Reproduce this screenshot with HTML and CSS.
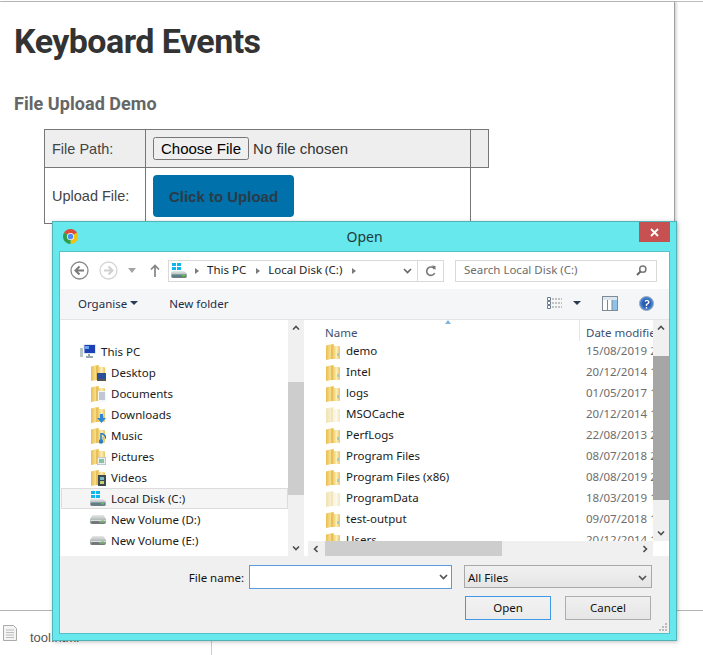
FILE: index.html
```html
<!DOCTYPE html>
<html lang="en">
<head>
<meta charset="utf-8">
<title>File Upload Demo</title>
<link rel="stylesheet" href="styles.css">
</head>
<body>
<svg class="defs" width="0" height="0" aria-hidden="true">
  <defs>
    <linearGradient id="fold" x1="0" x2="1" y1="0" y2="0">
      <stop offset="0" stop-color="#e9bd52"/><stop offset=".3" stop-color="#f7dc8a"/><stop offset=".55" stop-color="#f3d06e"/><stop offset=".75" stop-color="#fbeeb8"/><stop offset="1" stop-color="#e8c566"/>
    </linearGradient>
    <linearGradient id="foldl" x1="0" x2="1" y1="0" y2="0">
      <stop offset="0" stop-color="#efe2b4"/><stop offset=".4" stop-color="#f9f1d2"/><stop offset=".75" stop-color="#fdf9e8"/><stop offset="1" stop-color="#efe6c4"/>
    </linearGradient>
    <linearGradient id="drv" x1="0" x2="0" y1="0" y2="1">
      <stop offset="0" stop-color="#e8e8e8"/><stop offset=".5" stop-color="#b5bcbc"/><stop offset="1" stop-color="#6b7272"/>
    </linearGradient>
    <symbol id="folder" viewBox="0 0 14 16">
      <path d="M0 1.5 L6 0 H8 V2 H13 Q14 2 14 3 V14 Q14 15 13 15 H6 L0 16 Z" fill="url(#fold)"/>
      <path d="M6 1 V15" stroke="#d9a93c" stroke-width="1"/>
      <path d="M12 9v3" stroke="#6fb6dd" stroke-width="1"/>
    </symbol>
    <symbol id="folder-light" viewBox="0 0 14 16">
      <path d="M0 1.5 L6 0 H8 V2 H13 Q14 2 14 3 V14 Q14 15 13 15 H6 L0 16 Z" fill="url(#foldl)"/>
      <path d="M6 1 V15" stroke="#e6d8a6" stroke-width="1"/>
    </symbol>
    <symbol id="drive" viewBox="0 0 16 9">
      <path d="M2 1 Q2 0 3 0 H13 Q14 0 14 1 L16 4 V7 Q16 9 14 9 H2 Q0 9 0 7 V4 Z" fill="url(#drv)"/>
      <path d="M0.5 5.5 H15.5" stroke="#f4f4f4" stroke-width=".7"/>
      <rect x="11" y="5.5" width="3" height="2" fill="#57c84a"/>
      <rect x="2" y="6.5" width="7" height="1" fill="#596060"/>
    </symbol>
    <symbol id="windrive" viewBox="0 0 16 16">
      <rect x="1" y="0" width="4" height="3" fill="#11b5ee"/><rect x="6" y="0" width="4" height="3" fill="#11b5ee"/>
      <rect x="1" y="4" width="4" height="3" fill="#11b5ee"/><rect x="6" y="4" width="4" height="3" fill="#11b5ee"/>
      <path d="M1 8 H13 L16 10.5 V13 Q16 15 14 15 H2 Q0 15 0 13 V10 Z" fill="url(#drv)"/>
      <rect x="1" y="11.5" width="14" height="2.5" fill="#5d7f87"/>
      <rect x="11" y="12" width="3" height="1.5" fill="#57c84a"/>
    </symbol>
  </defs>
</svg>

<div class="topline"></div>
<main class="page">
  <h1 class="title">Keyboard Events</h1>
  <h2 class="subtitle">File Upload Demo</h2>
  <table class="upload">
    <tr class="shaded">
      <td class="label-cell">File Path:</td>
      <td class="field-cell"><input class="file" type="file"></td>
      <td class="end-cell"></td>
    </tr>
    <tr>
      <td class="label-cell">Upload File:</td>
      <td class="field-cell"><button class="upload-btn" type="button">Click to Upload</button></td>
    </tr>
  </table>
</main>

<footer class="downloads">
  <div class="download">
    <svg class="doc" width="14" height="16" viewBox="0 0 14 16"><path d="M.5.5h10l3 3v12H.5z" fill="#f4f4f4" stroke="#a9a9a9"/><path d="M3 5h8M3 7.500h8M3 10h8M3 12.500h8" stroke="#bdbdbd"/></svg>
    <span class="download-name">tool.html</span>
  </div>
</footer>

<section class="dialog">
  <header class="titlebar">
    <svg class="chrome" width="15" height="15" viewBox="0 0 16 16">
      <path d="M8 8 L1.1 4 A8 8 0 0 1 14.9 4 Z" fill="#dd4b39"/>
      <path d="M8 8 L14.9 4 A8 8 0 0 1 8 16 Z" fill="#f4c20d"/>
      <path d="M8 8 L8 16 A8 8 0 0 1 1.1 4 Z" fill="#2e9e49"/>
      <circle cx="8" cy="8" r="3.8" fill="#fff"/><circle cx="8" cy="8" r="3" fill="#4c8bf5"/>
    </svg>
    <span class="dialog-title">Open</span>
    <button class="close" type="button" aria-label="Close">
      <svg width="9" height="9" viewBox="0 0 9 9"><path d="M1 1l7 7M8 1L1 8" stroke="#fff" stroke-width="1.8"/></svg>
    </button>
  </header>

  <div class="client">
    <div class="nav">
      <svg class="nav-back" width="19" height="19" viewBox="0 0 19 19"><circle cx="9.5" cy="9.5" r="8.5" fill="#fff" stroke="#8a8a8a" stroke-width="1.3"/><path d="M14 9.5H6M9.5 5.5l-4 4 4 4" fill="none" stroke="#7a7a7a" stroke-width="2"/></svg>
      <svg class="nav-fwd" width="19" height="19" viewBox="0 0 19 19"><circle cx="9.5" cy="9.5" r="8.5" fill="#fff" stroke="#d4d4d4" stroke-width="1.3"/><path d="M5 9.5h8M9.5 5.5l4 4-4 4" fill="none" stroke="#d0d0d0" stroke-width="2"/></svg>
      <svg class="nav-caret" width="8" height="5" viewBox="0 0 8 5"><path d="M0 0h8L4 5z" fill="#a4a4a4"/></svg>
      <svg class="nav-up" width="10" height="13" viewBox="0 0 10 13"><path d="M5 13V2M1 5.5L5 1.5l4 4" fill="none" stroke="#858585" stroke-width="1.7"/></svg>
      <div class="crumbs">
        <svg class="crumb-drive" width="16" height="16"><use href="#windrive"/></svg>
        <i class="tri"></i><span>This PC</span><i class="tri"></i><span>Local Disk (C:)</span><i class="tri"></i>
        <svg class="crumb-chev" width="9" height="6" viewBox="0 0 9 6"><path d="M1 1l3.5 3.5L8 1" fill="none" stroke="#666" stroke-width="1.6"/></svg>
        <span class="crumb-refresh">
          <svg width="11" height="12" viewBox="0 0 11 12"><path d="M9.5 4A4.2 4.2 0 1 0 9.7 8" fill="none" stroke="#777" stroke-width="1.6"/><path d="M6.5 0.5L10.5 1V5z" fill="#777"/></svg>
        </span>
      </div>
      <div class="search">
        <span>Search Local Disk (C:)</span>
        <svg width="11" height="11" viewBox="0 0 11 11"><circle cx="6.8" cy="4.2" r="3.1" fill="none" stroke="#777" stroke-width="1.5"/><path d="M4.5 6.5L1 10" stroke="#666" stroke-width="2"/></svg>
      </div>
    </div>

    <div class="toolbar">
      <span class="tool">Organise</span><i class="tool-caret"></i>
      <span class="tool tool-new">New folder</span>
      <span class="tool-right">
        <svg width="15" height="12" viewBox="0 0 15 12"><path d="M.5.5h3v3h-3zM.5 4.5h3v3h-3zM.5 8.5h3v3h-3z" fill="#fff" stroke="#6d7d90"/><path d="M5 2h10M5 6h10M5 10h10" stroke="#8e8e8e" stroke-dasharray="2 1"/></svg>
        <i class="tool-caret view-caret"></i>
        <svg class="pane-icon" width="16" height="15" viewBox="0 0 16 15"><rect x=".5" y=".5" width="15" height="14" fill="#fff" stroke="#7e8b96"/><rect x="1" y="1" width="14" height="3" fill="#dbe6ee"/><rect x="10" y="4" width="5" height="10" fill="#8fc2ea"/><path d="M5.5 4v10M10 4v10" stroke="#7e8b96"/></svg>
        <svg class="help-icon" width="15" height="15" viewBox="0 0 15 15"><circle cx="7.5" cy="7.5" r="7" fill="#3f7fd0" stroke="#a3acb8"/><circle cx="7.5" cy="7.5" r="4.5" fill="#2b5db0"/><path d="M6 5.5Q7.5 3.5 9.300 5T7.500 8.500V10M7.500 11v1.500" fill="none" stroke="#fff" stroke-width="1.4"/></svg>
      </span>
    </div>

    <div class="panes">
      <nav class="tree-pane">
        <ul class="tree">
          <li class="pc">
            <svg width="16" height="15" viewBox="0 0 16 15"><rect x="0" y="4" width="3" height="9" fill="#b9c6c6"/><rect x="3.500" y="0" width="12.500" height="10" fill="#dfe6ee"/><rect x="4.500" y="1" width="10.500" height="8" fill="#1d3fb5"/><rect x="5" y="2" width="4" height="3" fill="#68a7ea"/><path d="M9 10v2M6 13h7" stroke="#9aa4ad" stroke-width="2"/></svg>
            <span>This PC</span>
          </li>
          <li><span class="tree-ico"><svg width="14" height="16"><use href="#folder"/></svg><svg class="over" width="9" height="8" viewBox="0 0 9 8"><rect x="0" y="0" width="9" height="6" fill="#2c4f9a"/><rect y="6" width="9" height="2" fill="#555"/></svg></span><span>Desktop</span></li>
          <li><span class="tree-ico"><svg width="14" height="16"><use href="#folder"/></svg><svg class="over" width="8" height="11" viewBox="0 0 8 11"><rect width="8" height="11" fill="#f4f6f8"/><path d="M1 2h6M1 4h6M1 6h6M1 8h6" stroke="#8b9bac"/></svg></span><span>Documents</span></li>
          <li><span class="tree-ico"><svg width="14" height="16"><use href="#folder"/></svg><svg class="over" width="9" height="9" viewBox="0 0 9 9"><path d="M3 0h3v4h3L4.500 9 0 4h3z" fill="#2e86d8"/></svg></span><span>Downloads</span></li>
          <li><span class="tree-ico"><svg width="14" height="16"><use href="#folder"/></svg><svg class="over" width="7" height="11" viewBox="0 0 7 11"><path d="M2 8V0q5 2 5 6" fill="none" stroke="#2a7fc4" stroke-width="1.500"/><circle cx="2" cy="8.500" r="2.200" fill="#2a7fc4"/></svg></span><span>Music</span></li>
          <li><span class="tree-ico"><svg width="14" height="16"><use href="#folder"/></svg><svg class="over" width="9" height="8" viewBox="0 0 9 8"><rect width="9" height="8" fill="#e8eef0" stroke="#9aa7ad"/><rect x="2" y="2" width="5" height="4" fill="#8cc0a6"/></svg></span><span>Pictures</span></li>
          <li><span class="tree-ico"><svg width="14" height="16"><use href="#folder"/></svg><svg class="over" width="8" height="11" viewBox="0 0 8 11"><rect width="8" height="11" fill="#3e4a4c"/><rect x="2" y="2" width="4" height="3" fill="#78b6c8"/><rect x="2" y="6" width="4" height="3" fill="#c2d07c"/></svg></span><span>Videos</span></li>
          <li class="selected"><svg width="16" height="16"><use href="#windrive"/></svg><span>Local Disk (C:)</span></li>
          <li class="vol"><svg width="16" height="9"><use href="#drive"/></svg><span>New Volume (D:)</span></li>
          <li class="vol"><svg width="16" height="9"><use href="#drive"/></svg><span>New Volume (E:)</span></li>
        </ul>
        <div class="vscroll tree-scroll">
          <svg class="arr" width="8" height="5" viewBox="0 0 8 5"><path d="M1 4.500L4 1.500l3 3" fill="none" stroke="#505050" stroke-width="1.600"/></svg>
          <div class="track"><div class="thumb"></div></div>
          <svg class="arr" width="8" height="5" viewBox="0 0 8 5"><path d="M1 .5l3 3 3-3" fill="none" stroke="#505050" stroke-width="1.600"/></svg>
        </div>
      </nav>

      <div class="list-pane">
        <div class="list-main">
          <div class="list-head">
            <span class="col-name">Name</span>
            <i class="sort"></i>
            <span class="col-date">Date modified</span>
          </div>
          <ul class="files">
            <li><svg width="14" height="16"><use href="#folder"/></svg><span class="fname">demo</span><span class="fdate">15/08/2019 2</span></li>
            <li><svg width="14" height="16"><use href="#folder"/></svg><span class="fname">Intel</span><span class="fdate">20/12/2014 1</span></li>
            <li><svg width="14" height="16"><use href="#folder"/></svg><span class="fname">logs</span><span class="fdate">01/05/2017 1</span></li>
            <li><svg width="14" height="16"><use href="#folder-light"/></svg><span class="fname">MSOCache</span><span class="fdate">20/12/2014 1</span></li>
            <li><svg width="14" height="16"><use href="#folder"/></svg><span class="fname">PerfLogs</span><span class="fdate">22/08/2013 2</span></li>
            <li><svg width="14" height="16"><use href="#folder"/></svg><span class="fname">Program Files</span><span class="fdate">08/07/2018 2</span></li>
            <li><svg width="14" height="16"><use href="#folder"/></svg><span class="fname">Program Files (x86)</span><span class="fdate">08/08/2019 2</span></li>
            <li><svg width="14" height="16"><use href="#folder-light"/></svg><span class="fname">ProgramData</span><span class="fdate">18/03/2019 1</span></li>
            <li><svg width="14" height="16"><use href="#folder"/></svg><span class="fname">test-output</span><span class="fdate">09/07/2018 1</span></li>
            <li><svg width="14" height="16"><use href="#folder"/></svg><span class="fname">Users</span><span class="fdate">20/12/2014 1</span></li>
          </ul>
          <div class="hscroll">
            <svg class="arr" width="5" height="8" viewBox="0 0 5 8"><path d="M4.500 1L1.500 4l3 3" fill="none" stroke="#505050" stroke-width="1.600"/></svg>
            <div class="htrack"><div class="hthumb"></div></div>
            <svg class="arr" width="5" height="8" viewBox="0 0 5 8"><path d="M.5 1l3 3-3 3" fill="none" stroke="#505050" stroke-width="1.600"/></svg>
          </div>
        </div>
        <div class="vscroll list-scroll">
          <svg class="arr" width="8" height="5" viewBox="0 0 8 5"><path d="M1 4.500L4 1.500l3 3" fill="none" stroke="#505050" stroke-width="1.600"/></svg>
          <div class="track"><div class="thumb"></div></div>
          <svg class="arr" width="8" height="5" viewBox="0 0 8 5"><path d="M1 .5l3 3 3-3" fill="none" stroke="#505050" stroke-width="1.600"/></svg>
        </div>
      </div>
    </div>

    <div class="bottom">
      <div class="bottom-row">
        <label class="fname-label" for="fn">File name:</label>
        <div class="fname-box">
          <input id="fn" class="fname-input" type="text">
          <svg width="9" height="6" viewBox="0 0 9 6"><path d="M1 1l3.500 3.500L8 1" fill="none" stroke="#555" stroke-width="1.700"/></svg>
        </div>
        <div class="type-box">
          <span>All Files</span>
          <svg width="9" height="6" viewBox="0 0 9 6"><path d="M1 1l3.500 3.500L8 1" fill="none" stroke="#555" stroke-width="1.700"/></svg>
        </div>
      </div>
      <div class="bottom-actions">
        <button class="dlg-btn primary" type="button">Open</button>
        <button class="dlg-btn" type="button">Cancel</button>
      </div>
      <svg class="grip" width="8" height="8" viewBox="0 0 8 8"><path d="M6 0h2v2H6zM3 3h2v2H3zM6 3h2v2H6zM0 6h2v2H0zM3 6h2v2H3zM6 6h2v2H6z" fill="#bcbcbc"/></svg>
    </div>
  </div>
</section>
</body>
</html>
```
FILE: styles.css
```css
* { box-sizing: border-box; }
html, body { margin: 0; padding: 0; }
body {
  position: relative;
  width: 703px;
  height: 655px;
  overflow: hidden;
  background: #fff;
  font-family: "Liberation Sans", Arial, sans-serif;
}
.defs { position: absolute; }
ul { list-style: none; margin: 0; padding: 0; }
i { display: block; }

.topline {
  height: 1px;
  margin-top: 1px;
  background: #bdbdbd;
}
.page {
  width: 675px;
  height: 608px;
  border-right: 1px solid #a0a0a0;
  box-shadow: 2px 0 2px rgba(0,0,0,.15);
  padding: 17px 0 0 14px;
  overflow: hidden;
}
.title {
  margin: 0;
  font: 700 34px/44px Roboto, sans-serif;
  letter-spacing: -.55px;
  color: #333;
}
.subtitle {
  margin: 29px 0 0;
  font: 700 18px/24px Roboto, sans-serif;
  letter-spacing: .05px;
  color: #666;
}
.upload {
  margin: 13px 0 0 30px;
  border-collapse: collapse;
  width: 445px;
  font-size: 14.500px;
  color: #444;
}
.upload td { border: 1px solid #777; padding: 0 7px; }
.shaded { background: #eee; height: 38px; }
.label-cell { width: 101px; }
.end-cell { width: 18px; }
.file { font: 15px "Liberation Sans", sans-serif; color: #333; display: block; width: 300px; }
.upload-btn {
  display: block;
  width: 141px;
  height: 42px;
  margin: 7px 0 6px;
  border: 0;
  border-radius: 4px;
  background: #0071aa;
  color: #2a3b47;
  font: 700 15px "Liberation Sans", sans-serif;
}

.downloads {
  height: 45px;
  border-top: 1px solid #b5b5b5;
  width: 703px;
}
.download {
  width: 212px;
  height: 44px;
  border-right: 1px solid #ccc;
  display: flex;
  align-items: center;
  padding-left: 3px;
  gap: 13px;
  font-size: 13px;
  color: #555;
}
.download-name { margin-top: 9px; }

.dialog {
  position: absolute;
  left: 52px;
  top: 221px;
  width: 625px;
  height: 420px;
  background: #67e8ec;
  border: 1px solid #4fb3b8;
  box-shadow: 1px 1px 4px rgba(0,0,0,.25);
  padding: 0 7px 7px;
  display: flex;
  flex-direction: column;
  font-family: "Noto Sans", sans-serif;
  font-size: 11.500px;
  color: #1a1a1a;
}
.titlebar {
  height: 30px;
  flex: none;
  display: grid;
  grid-template-columns: 1fr auto 1fr;
  align-items: center;
}
.chrome { margin: 0 0 1px 3px; }
.dialog-title { font-size: 14px; color: #23393b; padding-bottom: 1px; }
.close {
  justify-self: end;
  align-self: start;
  width: 31px;
  height: 20px;
  margin-right: -1px;
  border: 0;
  padding: 0;
  background: #c75050;
  display: flex;
  align-items: center;
  justify-content: center;
}
.client {
  flex: 1;
  min-height: 0;
  background: #fff;
  box-shadow: 0 0 0 1px #55c0c5;
  display: flex;
  flex-direction: column;
}

.nav {
  height: 37px;
  flex: none;
  display: flex;
  align-items: center;
  padding-left: 10px;
}
.nav-fwd { margin-left: 10px; }
.nav-caret { margin-left: 10px; }
.nav-up { margin-left: 14px; }
.crumbs {
  margin-left: 8px;
  width: 276px;
  height: 22px;
  border: 1px solid #d9d9d9;
  display: flex;
  align-items: center;
  padding-left: 2px;
  color: #1e1e1e;
}
.crumbs svg.crumb-drive { margin-right: 8px; }
.tri {
  width: 0;
  height: 0;
  border-left: 4px solid #7a7a7a;
  border-top: 3.500px solid transparent;
  border-bottom: 3.500px solid transparent;
  margin-right: 8px;
}
.crumbs span { margin-right: 10px; padding-bottom: 2px; white-space: nowrap; }
.crumb-chev { margin-left: auto; margin-right: 5px; }
.crumbs .crumb-refresh {
  width: 26px;
  height: 100%;
  margin: 0;
  padding: 0;
  border-left: 1px solid #d9d9d9;
  display: flex;
  align-items: center;
  justify-content: center;
}
.search {
  margin-left: 11px;
  width: 202px;
  height: 22px;
  border: 1px solid #d9d9d9;
  display: flex;
  align-items: center;
  justify-content: space-between;
  padding: 0 9px 0 8px;
  color: #6d6d6d;
}
.search span { padding-bottom: 2px; }

.toolbar {
  height: 31px;
  flex: none;
  background: #f5f6f7;
  border-bottom: 1px solid #e5e5e5;
  display: flex;
  align-items: center;
  padding: 0 15px 2px 18px;
  color: #1f2d4a;
}
.tool-caret {
  margin-left: 3px;
  width: 0;
  height: 0;
  border-top: 4px solid #2a3b55;
  border-left: 4px solid transparent;
  border-right: 4px solid transparent;
}
.tool-new { margin-left: 31px; }
.tool-right { margin-left: auto; display: flex; align-items: center; }
.view-caret { margin-left: 11px; }
.pane-icon { margin-left: 21px; }
.help-icon { margin-left: 21px; }

.panes {
  flex: 1;
  min-height: 0;
  display: flex;
  gap: 4px;
  background: #fff;
}
.tree-pane {
  width: 244px;
  flex: none;
  display: flex;
  background: #fff;
}
.tree { flex: 1; padding: 21px 0 0 1px; }
.tree li {
  height: 21px;
  display: flex;
  align-items: center;
  gap: 6px;
  padding: 1px 0 1px 29px;
  border: 1px solid transparent;
  white-space: nowrap;
}
.tree li span:last-child { padding-bottom: 1px; }
.tree li.pc { padding-left: 18px; gap: 5px; }
.tree li.selected { padding-left: 28px; background: #f5f5f5; border-color: #dcdcdc; gap: 5px; }
.tree li.vol { padding-left: 28px; gap: 5px; }
.tree-ico { position: relative; width: 14px; height: 16px; display: block; }
.tree-ico svg { display: block; }
.tree-ico .over { position: absolute; right: -1px; bottom: 0; }

.vscroll {
  width: 16px;
  flex: none;
  background: #f0f0f0;
  display: flex;
  flex-direction: column;
  align-items: center;
}
.arr { flex: none; }
.vscroll > .arr:first-child { margin: 5px 0 7px; }
.vscroll > .arr:last-child { margin: 7px 0 5px; }
.track { flex: 1; width: 100%; }
.thumb { background: #cdcdcd; width: 100%; }
.tree-scroll .thumb { margin-top: 45px; height: 113px; }

.list-pane { flex: 1; min-width: 0; display: flex; }
.list-main { flex: 1; min-width: 0; display: flex; flex-direction: column; }
.list-head {
  height: 21px;
  flex: none;
  position: relative;
  display: grid;
  grid-template-columns: 271px 1fr;
  color: #3d4f6f;
  overflow: hidden;
  white-space: nowrap;
}
.col-name { padding: 5px 0 0 17px; }
.col-date { padding: 5px 0 0 6px; border-left: 1px solid #e5e5e5; }
.sort {
  position: absolute;
  left: 137px;
  top: 0;
  width: 0;
  height: 0;
  border-bottom: 4px solid #7fb3dc;
  border-left: 3.500px solid transparent;
  border-right: 3.500px solid transparent;
}
.files { height: 200px; flex: none; overflow: hidden; }
.files li {
  height: 21px;
  display: grid;
  grid-template-columns: 18px 14px 6px 233px 7px 1fr;
  align-items: center;
  white-space: nowrap;
}
.files svg { grid-column: 2; }
.fname { grid-column: 4; padding-bottom: 2px; }
.fdate { grid-column: 6; color: #6d6d6d; overflow: hidden; padding-bottom: 2px; }
.hscroll {
  height: 16px;
  flex: none;
  background: #f0f0f0;
  display: flex;
  align-items: center;
  padding: 0 5px;
}
.htrack { flex: 1; height: 100%; padding: 0 7px 0 7px; }
.hthumb { background: #cdcdcd; width: 177px; height: 100%; }
.list-scroll .thumb { margin-top: 19px; height: 144px; background: #a6a6a6; }
.list-scroll { height: 221px; }

.bottom {
  height: 77px;
  flex: none;
  background: #f0f0f0;
  position: relative;
  padding: 9px 17px 0 0;
}
.bottom-row {
  display: flex;
  justify-content: flex-end;
  align-items: flex-start;
}
.fname-label { line-height: 24px; margin-right: 5px; padding-top: 1px; color: #111; }
.fname-box {
  width: 203px;
  height: 24px;
  background: #fff;
  border: 1px solid #5b9bdc;
  display: flex;
  align-items: center;
  padding-right: 3px;
}
.fname-input { flex: 1; min-width: 0; height: 100%; border: 0; padding: 0; outline: 0; background: transparent; }
.type-box {
  margin-left: 12px;
  width: 188px;
  height: 23px;
  border: 1px solid #a9a9a9;
  background: linear-gradient(#f1f1f1, #e5e5e5);
  display: flex;
  align-items: center;
  justify-content: space-between;
  padding: 2px 4px 0 3px;
  font-size: 11.500px;
  color: #111;
}
.bottom-actions {
  margin-top: 6px;
  display: flex;
  justify-content: flex-end;
  gap: 14px;
  padding-right: 1px;
}
.dlg-btn {
  width: 86px;
  height: 24px;
  border: 1px solid #adadad;
  background: linear-gradient(#f0f0f0, #e6e6e6);
  padding: 0 0 2px;
  font: 11.500px "Noto Sans", sans-serif;
  color: #111;
}
.dlg-btn.primary { border-color: #3f98ea; background: linear-gradient(#f2f2f2, #ebebeb); }
.grip { position: absolute; right: 2px; bottom: 2px; }
```
